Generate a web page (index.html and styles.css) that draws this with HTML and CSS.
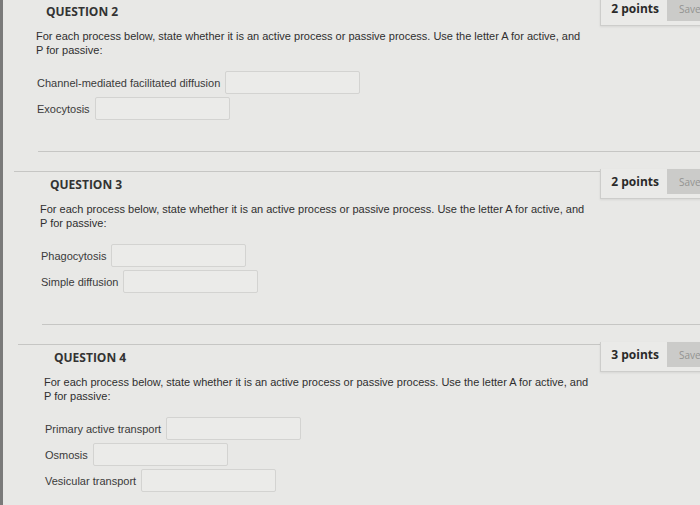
FILE: index.html
```html
<!DOCTYPE html>
<html>
<head>
<meta charset="utf-8">
<link rel="stylesheet" href="styles.css">
</head>
<body>
<ul class="questions">
  <li class="question q2">
    <div class="q-head">
      <h3 class="q-title">QUESTION 2</h3>
      <div class="points"><span class="points-value">2 points</span><button class="save">Save</button></div>
    </div>
    <div class="q-body">
      <p class="q-text">For each process below, state whether it is an active process or passive process. Use the letter A for active, and<br>P for passive:</p>
      <div class="answers">
        <div class="answer"><label>Channel-mediated facilitated diffusion</label><input class="field" type="text"></div>
        <div class="answer"><label>Exocytosis</label><input class="field" type="text"></div>
      </div>
    </div>
    <div class="q-foot"></div>
  </li>
  <li class="question q3">
    <div class="q-head">
      <h3 class="q-title">QUESTION 3</h3>
      <div class="points"><span class="points-value">2 points</span><button class="save">Save</button></div>
    </div>
    <div class="q-body">
      <p class="q-text">For each process below, state whether it is an active process or passive process. Use the letter A for active, and<br>P for passive:</p>
      <div class="answers">
        <div class="answer"><label>Phagocytosis</label><input class="field" type="text"></div>
        <div class="answer"><label>Simple diffusion</label><input class="field" type="text"></div>
      </div>
    </div>
    <div class="q-foot"></div>
  </li>
  <li class="question q4">
    <div class="q-head">
      <h3 class="q-title">QUESTION 4</h3>
      <div class="points"><span class="points-value">3 points</span><button class="save">Save</button></div>
    </div>
    <div class="q-body">
      <p class="q-text">For each process below, state whether it is an active process or passive process. Use the letter A for active, and<br>P for passive:</p>
      <div class="answers">
        <div class="answer"><label>Primary active transport</label><input class="field" type="text"></div>
        <div class="answer"><label>Osmosis</label><input class="field" type="text"></div>
        <div class="answer"><label>Vesicular transport</label><input class="field" type="text"></div>
      </div>
    </div>
  </li>
</ul>
</body>
</html>
```
FILE: styles.css
```css
html, body {
  margin: 0;
  height: 100%;
}
body {
  box-sizing: border-box;
  background: #e8e8e6;
  border-left: 3px solid #7a7a7a;
  overflow: hidden;
  font-family: "Liberation Sans", Arial, sans-serif;
  color: #333;
}
.questions {
  list-style: none;
  margin: 0 -12px 0 0;
  padding: 0;
}
.question {
  border-top: 1px solid #c6c6c4;
}
.q2 { margin-left: 7px; margin-top: -2px; }
.q3 { margin-left: 11px; }
.q4 { margin-left: 15px; }

.q-head {
  display: flex;
  justify-content: space-between;
  align-items: flex-start;
  height: 30px;
}
.q-title {
  margin: 5px 0 0 36px;
  font: 700 12px/16px "Open Sans", sans-serif;
  color: #333;
}
.points {
  display: flex;
  align-items: flex-start;
  margin-top: -3px;
  background: #eaeae8;
  border-left: 1px solid #cdcdcb;
  border-bottom: 1px solid #cdcdcb;
  box-shadow: 0 1px 2px rgba(0, 0, 0, 0.08);
  padding: 0 0 4px 10px;
}
.points-value {
  font: 700 12px/25px "Open Sans", sans-serif;
  color: #2a2a2a;
  margin-right: 8px;
}
.save {
  width: 45px;
  height: 25px;
  border: 0;
  margin: 0;
  background: #cbcbc9;
  color: #939391;
  font: 400 10px "Open Sans", sans-serif;
  padding: 0 0 0 12px;
  text-align: left;
}
.q-body {
  padding-left: 26px;
}
.q-text {
  margin: 0;
  font-size: 11px;
  line-height: 14px;
  color: #2f2f2f;
}
.answers {
  margin-top: 14px;
  display: flex;
  flex-direction: column;
  align-items: flex-start;
  gap: 3px;
}
.answer {
  display: flex;
  align-items: center;
  gap: 5px;
  padding-left: 1px;
  font-size: 11px;
  color: #3a3a3a;
}
.field {
  width: 135px;
  height: 23px;
  box-sizing: border-box;
  margin: 0;
  padding: 0;
  border: 1px solid #d3d3d1;
  border-radius: 2px;
  background: #ebebe9;
}
.q-foot {
  margin: 31px 0 19px 28px;
  border-top: 1px solid #c6c6c4;
}
```
